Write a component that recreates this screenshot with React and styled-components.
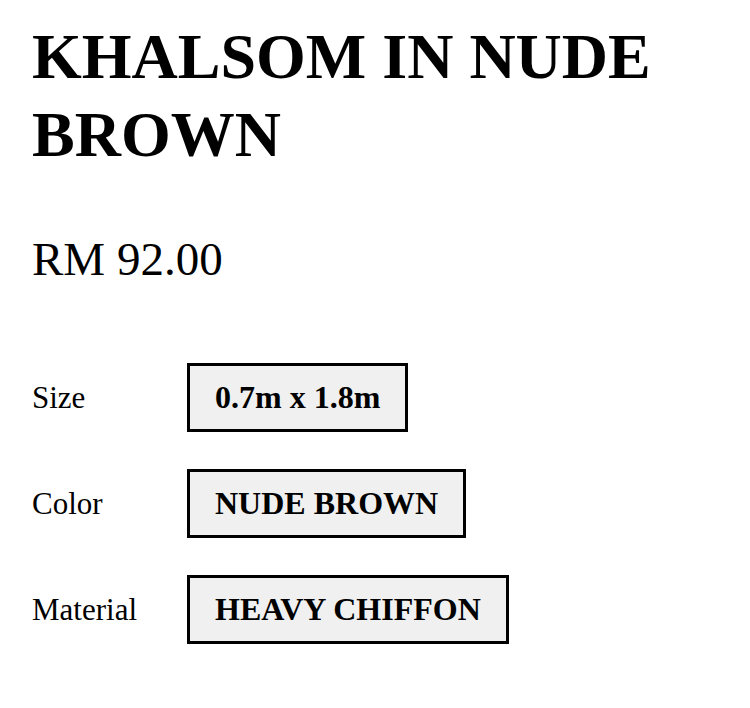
import React from "react";
import styled, { createGlobalStyle } from "styled-components";

const Global = createGlobalStyle`
  html, body { margin: 0; padding: 0; background: #fff; }
  body { font-family: "Liberation Serif", "Times New Roman", serif; color: #000; }
`;

const Page = styled.main`
  padding: 18px 32px 40px;
`;

const Title = styled.h1`
  margin: 0;
  font-size: 64px;
  line-height: 78px;
  font-weight: 700;
  text-transform: uppercase;
`;

const Price = styled.div`
  margin-top: 58px;
  font-size: 47px;
  line-height: 54px;
`;

const Options = styled.div`
  margin-top: 77px;
  display: flex;
  flex-direction: column;
  gap: 37px;
`;

const Row = styled.div`
  display: grid;
  grid-template-columns: 155px auto;
  align-items: center;
`;

const Label = styled.span`
  font-size: 31px;
`;

const Value = styled.span`
  justify-self: start;
  box-sizing: border-box;
  height: 69px;
  display: inline-flex;
  align-items: center;
  padding: 0 25px;
  border: 3px solid #000;
  background: #f0f0f0;
  font-size: 32px;
  font-weight: 700;
`;

const options = [
  ["Size", "0.7m x 1.8m"],
  ["Color", "NUDE BROWN"],
  ["Material", "HEAVY CHIFFON"],
];

export default function App() {
  return (
    <>
      <Global />
      <Page>
        <Title>Khalsom in Nude Brown</Title>
        <Price>RM 92.00</Price>
        <Options>
          {options.map(([label, value]) => (
            <Row key={label}>
              <Label>{label}</Label>
              <Value>{value}</Value>
            </Row>
          ))}
        </Options>
      </Page>
    </>
  );
}
